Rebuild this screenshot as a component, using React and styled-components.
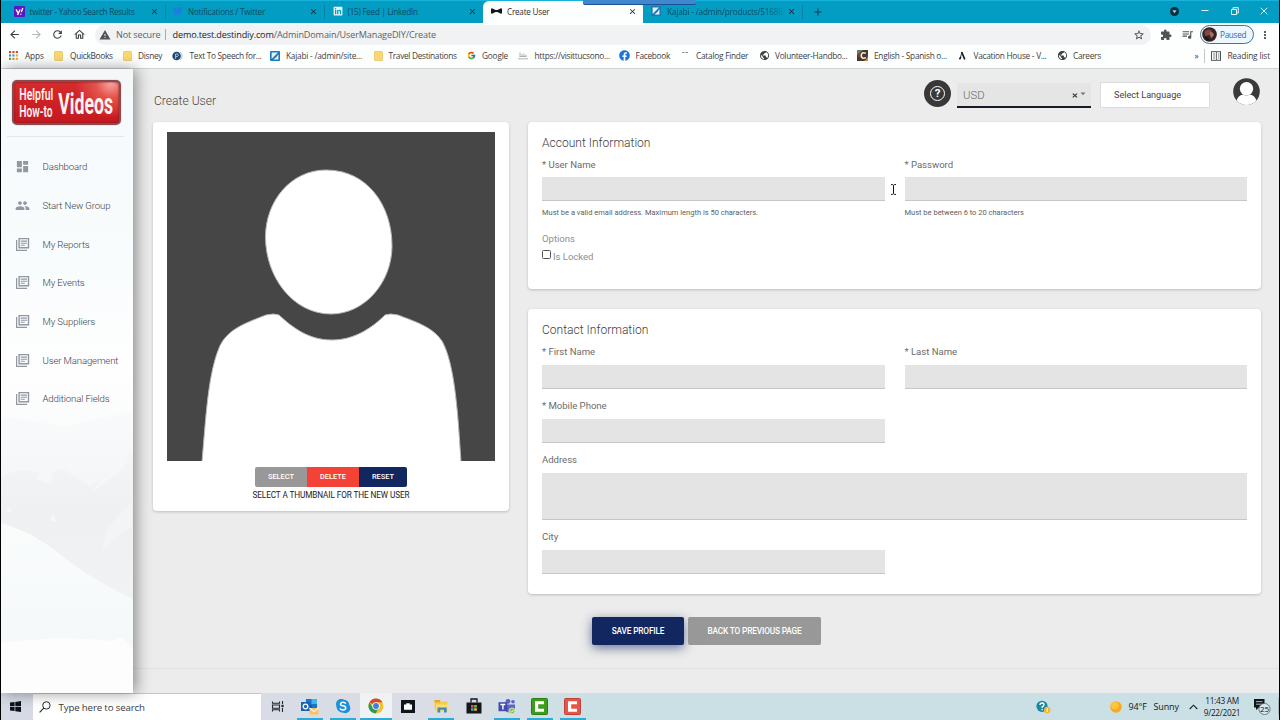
import React from 'react';
import styled, { createGlobalStyle } from 'styled-components';
import {
  MdDashboard, MdPeople, MdExtension, MdQueueMusic,
  MdStarBorder, MdRefresh, MdArrowBack, MdArrowForward, MdOutlineHome,
  MdWarning, MdMoreVert, MdPublic, MdClose, MdAdd,
} from 'react-icons/md';
import { FcGoogle } from 'react-icons/fc';
import { FaFacebook, FaTwitter, FaLinkedin } from 'react-icons/fa';

const GlobalStyle = createGlobalStyle`
  * { box-sizing: border-box; }
  body { margin: 0; background: #000; }
  svg { display: block; flex: none; }
  button { font: inherit; }
`;

const ui = '"Open Sans", "Noto Sans", sans-serif';
const NAVY = '#12275f';

const Screen = styled.div`
  width: 1280px;
  height: 720px;
  padding: 0 1px;
  overflow: hidden;
  display: flex;
  flex-direction: column;
  background: #000;
  font-family: Roboto, sans-serif;
  color: #3c4043;
`;

/* ---------- browser tabs ---------- */
const TabStrip = styled.div`
  position: relative;
  height: 23px;
  flex: none;
  display: flex;
  background: #039cc2;
  border-top: 1px solid #16b4da;
  font-family: ${ui};
`;

const Tab = styled.div`
  width: ${p => p.$w}px;
  height: 22px;
  padding: 0 6px 2px ${p => p.$pad}px;
  display: flex;
  align-items: center;
  background: ${p => (p.$active ? '#fdfefe' : 'transparent')};
  border-radius: 6px 6px 0 0;
  color: ${p => (p.$active ? '#2c2f33' : '#0b4a62')};
  font-size: 8.1px;
  letter-spacing: ${p => p.$ls || 0}px;
  white-space: nowrap;
`;

const TabTitle = styled.span`
  flex: 1;
  margin-left: ${p => p.$gap || 5}px;
  ${p => p.$fade && 'mask-image: linear-gradient(90deg, #000 84%, rgba(0,0,0,0.15) 100%); margin-right: 3px;'}
`;

const Divider = styled.i`
  width: 1px;
  height: ${p => p.$h || 14}px;
  align-self: center;
  background: ${p => p.$color || '#0781a5'};
`;

const NewTab = styled.div`
  width: 29px;
  display: grid;
  place-items: center;
  color: #06384c;
`;

const ShareBar = styled.div`
  position: absolute;
  left: 582px;
  top: -1px;
  width: 113px;
  height: 5px;
  background: #3f87cf;
  border-bottom: 1px solid #1c5294;
  border-radius: 0 0 2px 2px;
`;

const WindowButtons = styled.div`
  margin-left: auto;
  width: 120px;
  display: flex;
  align-items: center;
  justify-content: space-between;
  padding: 0 11px 3px 10px;
  color: #e4f7fb;
`;

/* ---------- toolbar ---------- */
const Toolbar = styled.div`
  height: 23px;
  flex: none;
  display: flex;
  align-items: center;
  background: #fdfefe;
  font-family: ${ui};
  color: #3b3e42;
`;

const NavButtons = styled.div`
  width: 94px;
  padding-left: 7px;
  display: flex;
  gap: 8.5px;
`;

const AddressBar = styled.div`
  width: 1056px;
  height: 20px;
  display: flex;
  align-items: center;
  padding: 0 6px 0 4px;
  border-radius: 10px;
  background: #f0f2f4;
  font-size: 9.1px;
  color: #5d6166;
  white-space: nowrap;
`;

const NotSecure = styled.span`
  width: 49px;
  margin-left: 5px;
  letter-spacing: -0.16px;
`;

const Url = styled.span`
  flex: 1;
  margin-left: 6.5px;
  letter-spacing: -0.14px;
  b { font-weight: 400; color: #202327; }
`;

const ToolbarIcons = styled.div`
  display: flex;
  align-items: center;
  gap: 9px;
  margin-left: 8.5px;
  color: #505357;
`;

const Paused = styled.div`
  display: flex;
  align-items: center;
  gap: 3.5px;
  width: 54px;
  height: 19px;
  margin: 0 5.5px 0 6px;
  padding-left: 1px;
  border: 1px solid #46718f;
  border-radius: 10px;
  background: #edf7fd;
  color: #2a6cb0;
  font-size: 8.2px;
  letter-spacing: -0.3px;
`;

/* ---------- bookmarks ---------- */
const Bookmarks = styled.div`
  height: 23px;
  flex: none;
  display: flex;
  align-items: center;
  padding: 0 9px 3px 8px;
  background: #fdfefe;
  border-bottom: 1px solid #cfd2d4;
  font-family: ${ui};
  font-size: 8.3px;
  color: #3d4043;
  white-space: nowrap;
`;

const Bookmark = styled.div`
  width: ${p => p.$w}px;
  display: flex;
  align-items: center;
  letter-spacing: ${p => p.$ls ?? -0.3}px;
`;

const BookmarkIcon = styled.span`
  width: ${p => p.$w}px;
`;

const ReadingList = styled.div`
  margin-left: auto;
  display: flex;
  align-items: center;
  gap: 6px;
  letter-spacing: -0.15px;
`;

/* ---------- page ---------- */
const Page = styled.div`
  height: 624px;
  flex: none;
  display: flex;
  background: #ececec;
`;

const Sidebar = styled.aside`
  position: relative;
  z-index: 1;
  width: 132px;
  flex: none;
  background: linear-gradient(#f4f6f7 0, #f7fafc 50px, #f9fcfd 200px, #fefefe 300px, #fafbfb 370px);
  box-shadow: 3px 0 14px rgba(0, 0, 0, 0.42);
`;

const Scenery = styled.svg`
  position: absolute;
  left: 0;
  bottom: 0;
`;

const SidebarBody = styled.div`
  position: relative;
  padding: 11px 11px 0;
`;

const LogoRule = styled.div`
  height: 12px;
  margin: 0 -2px 10.5px -5px;
  border-bottom: 1px solid #e3e7ea;
`;

const NavItem = styled.a`
  display: flex;
  align-items: center;
  height: 38.65px;
  padding-left: 3px;
  color: #3d4043;
  font-size: 9.6px;
  font-weight: 300;
  letter-spacing: -0.13px;
  white-space: nowrap;
  svg { color: #9298a2; margin-right: 12.5px; }
`;

const Main = styled.main`
  flex: 1;
  display: flex;
  flex-direction: column;
  padding: 0 18px 0 20px;
`;

const PageHeader = styled.header`
  height: 53px;
  display: flex;
  align-items: flex-start;
`;

const PageTitle = styled.h1`
  flex: 1;
  margin: 25px 0 0 1px;
  font-size: 12.1px;
  line-height: 15px;
  font-weight: 300;
  color: #484848;
`;

const CurrencySelect = styled.div`
  width: 134px;
  height: 25px;
  margin: 14px 9px 0 6px;
  padding: 1px 5px 0 6px;
  display: flex;
  align-items: center;
  background: #e5e5e5;
  border-bottom: 2px solid #141a28;
  font-size: 11.3px;
  font-weight: 300;
  color: #666;
  span { flex: 1; padding-top: 1px; }
`;

const LanguageSelect = styled.div`
  width: 110px;
  height: 26px;
  margin: 13px 23px 0 0;
  padding-left: 13px;
  line-height: 24px;
  background: #fff;
  border: 1px solid #dcdcdc;
  font-size: 9.1px;
  color: #444;
`;

const Columns = styled.div`
  display: flex;
  align-items: flex-start;
  gap: 19px;
`;

const Card = styled.section`
  background: #fff;
  border-radius: 4px;
  box-shadow: 0 1px 3px rgba(0, 0, 0, 0.2);
`;

const PhotoCard = styled(Card)`
  width: 356px;
  height: 389px;
  padding-top: 10px;
  display: flex;
  flex-direction: column;
  align-items: center;
`;

const ButtonGroup = styled.div`
  display: flex;
  margin-top: 6px;
  border-radius: 2px;
  overflow: hidden;
`;

const GroupButton = styled.button`
  width: ${p => p.$w}px;
  height: 20px;
  padding: 0 0 1px;
  border: 0;
  background: ${p => p.$bg};
  color: #fff;
  font-size: 7.4px;
  font-weight: 500;
`;

const PhotoHint = styled.p`
  margin: 3px 0 0;
  font-size: 8.2px;
  letter-spacing: -0.09px;
  line-height: 11px;
  color: #1c1c1c;
  white-space: nowrap;
`;

const Forms = styled.div`
  width: 733px;
  display: flex;
  flex-direction: column;
  gap: 20px;
`;

const FormCard = styled(Card)`
  height: ${p => p.$h}px;
  padding: 14px 14px 0;
`;

const CardTitle = styled.h2`
  margin: 0 0 7px;
  font-size: 12.05px;
  line-height: 15px;
  font-weight: 300;
  color: #3d3d3d;
`;

const Grid = styled.div`
  display: grid;
  grid-template-columns: 1fr 1fr;
  column-gap: 20px;
  row-gap: 10px;
`;

const Field = styled.label`
  display: block;
  grid-column: ${p => (p.$wide ? '1 / -1' : p.$first ? '1' : 'auto')};
`;

const FieldLabel = styled.span`
  display: block;
  height: ${p => p.$h || 20}px;
  line-height: 13px;
  font-size: 9.6px;
  color: #6c6c6c;
  letter-spacing: -0.03px;
`;

const Input = styled.span`
  display: block;
  height: ${p => p.$h || 24}px;
  background: #e4e4e4;
  border-bottom: 1px solid #c6c6c6;
`;

const Helper = styled.span`
  display: block;
  margin-top: 6px;
  font-size: 7.5px;
  line-height: 12px;
  color: #606060;
`;

const Options = styled.div`
  margin-top: 13px;
  font-size: 9.6px;
  letter-spacing: -0.05px;
  color: #8f8f8f;
  line-height: 13px;
`;

const CheckRow = styled.div`
  display: flex;
  align-items: flex-start;
  gap: 2px;
  margin-top: 5px;
`;

const Checkbox = styled.i`
  width: 9px;
  height: 9px;
  border: 1px solid #555;
  border-radius: 1.5px;
  background: #fff;
`;

const Actions = styled.div`
  display: flex;
  gap: 4px;
  margin: 23px 0 0 439px;
`;

const ActionButton = styled.button`
  width: ${p => p.$w}px;
  height: 28px;
  padding: 0 0 1px;
  border: 0;
  border-radius: 2px;
  background: ${p => p.$bg};
  box-shadow: ${p => (p.$raised ? '0 3px 11px rgba(18, 39, 95, 0.6)' : 'none')};
  color: #fff;
  font-size: 8.3px;
  letter-spacing: -0.16px;
  font-weight: 500;
  white-space: nowrap;
`;

const FooterRule = styled.div`
  margin: 23px -18px 0 -20px;
  border-top: 1px solid #e0e0e0;
`;

const TextCursor = styled.svg`
  position: absolute;
  left: 890px;
  top: 184px;
`;

/* ---------- taskbar ---------- */
const Taskbar = styled.footer`
  height: 27px;
  flex: none;
  display: flex;
  background: linear-gradient(90deg, #d5dae5 0, #dadde6 34%, #cbe0e5 46%, #cae0e4 100%);
  font-family: ${ui};
  color: #14181c;
`;

const Start = styled.div`
  width: 32px;
  padding-right: 3px;
  display: grid;
  place-items: center;
`;

const Search = styled.div`
  width: 228px;
  display: flex;
  align-items: center;
  gap: 7.5px;
  padding-left: 6px;
  border-top: 1px solid #c4c8ce;
  background: #fff;
  font-size: 9.7px;
  letter-spacing: -0.15px;
  color: #3b3b3b;
`;

const Tiles = styled.div`
  display: flex;
  gap: 0.85px;
`;

const Tile = styled.div`
  width: 32px;
  height: 27px;
  display: flex;
  flex-direction: column;
  align-items: center;
  justify-content: space-between;
  padding-top: 5px;
  background: ${p => (p.$current ? '#f0f2f6' : 'transparent')};
  &::after {
    content: '';
    width: ${p => (p.$current ? 32 : 26)}px;
    height: 2px;
    background: ${p => (p.$open ? '#2fa9d6' : 'transparent')};
  }
`;

const Tray = styled.div`
  margin-left: auto;
  display: flex;
  align-items: center;
  font-size: 9px;
  letter-spacing: -0.1px;
  white-space: nowrap;
`;

const Weather = styled.div`
  display: flex;
  align-items: center;
  gap: 6.5px;
  width: 79px;
  margin-left: 59px;
`;

const Clock = styled.div`
  width: 44px;
  margin: 0 9px 0 2px;
  text-align: center;
  font-size: 8.3px;
  line-height: 11.5px;
  letter-spacing: -0.3px;
`;

const Notifications = styled.div`
  width: 26px;
  border-right: 1px solid #a8bcc1;
`;

/* ---------- drawings ---------- */
const LibraryIcon = () => (
  <svg width="15" height="15" viewBox="0 0 15 15" fill="none" stroke="currentColor">
    <path d="M1.6 3V13.4H12" strokeWidth="1.2" />
    <path d="M4.1 1.6H13.5V10.8H4.1Z" strokeWidth="1.4" />
    <path d="M5.7 4.1H12M5.7 6.2H12M5.7 8.3H9.8" strokeWidth="1.1" />
  </svg>
);

const Folder = () => (
  <svg width="9" height="10" viewBox="0 0 9 10">
    <path d="M.5 1.2Q.5.5 1.2.5H7.8Q8.5.5 8.5 1.2V9.5H1.2Q.5 9.5.5 8.8Z" fill="#fbd970" stroke="#e2b94b" strokeWidth=".6" />
    <path d="M6.5 9.5V7.6H8.5" fill="#fff0b8" stroke="#e2b94b" strokeWidth=".5" />
  </svg>
);

const KajabiIcon = () => (
  <svg width="10" height="10" viewBox="0 0 10 10">
    <rect width="10" height="10" rx="1" fill="#1f78b4" />
    <path d="M1.6 1.6H8L1.6 8Z" fill="#dff1fb" />
    <path d="M8.4 3.3V8.4H3.4Q6.8 6.6 8.4 3.3Z" fill="#eaf6fc" />
  </svg>
);

const YahooIcon = () => (
  <svg width="11" height="11" viewBox="0 0 11 11">
    <rect width="11" height="11" rx="1" fill="#5b16c2" />
    <path d="M2 3.4 4 6.8M6 3.4 3.6 9M8.8 2 7.3 6.1M6.8 7.8v1" stroke="#fff" strokeWidth="1.3" fill="none" />
  </svg>
);

const BowTie = () => (
  <svg width="11" height="6" viewBox="0 0 11 6">
    <path d="M0 .8Q1 0 2 .7L4.6 2H6.4L9 .7Q10 0 11 .8V5.2Q10 6 9 5.3L6.4 4H4.6L2 5.3Q1 6 0 5.2Z" fill="#161616" />
  </svg>
);

const SpeechIcon = () => (
  <svg width="11" height="10" viewBox="0 0 11 10">
    <circle cx="4.6" cy="5" r="4.3" fill="#24486f" />
    <path d="M3.6 7.8V3H5.2Q6.6 3.2 6.4 4.4T3.8 5.6" fill="none" stroke="#a9c6e0" strokeWidth="1" />
    <path d="M8.4 1.2Q11.8 5 8.4 8.8" fill="none" stroke="#8cbde5" strokeWidth=".9" />
  </svg>
);

const PaleSketch = () => (
  <svg width="10" height="9" viewBox="0 0 10 9">
    <path d="M0 7.8H10M2 5.5V1.5M4 5V3M6 5.5V2.5M8 5.5V3.8M1.5 5.5H8.5" stroke="#a7a7a7" fill="none" strokeWidth=".9" />
  </svg>
);

const PaleDash = () => (
  <svg width="8" height="9" viewBox="0 0 8 9"><path d="M1 1.5H3.4M4.4 1.5H7" stroke="#8b8b8b" /></svg>
);

const AppsIcon = () => (
  <svg width="9" height="9" viewBox="0 0 9 9">
    {['#d93f36', '#d93f36', '#d93f36', '#43a05a', '#4a83dd', '#e9ad22', '#43a05a', '#d4902a', '#e9ad22'].map((c, i) => (
      <rect key={i} x={(i % 3) * 3.4} y={Math.floor(i / 3) * 3.4} width="2.1" height="2.1" fill={c} />
    ))}
  </svg>
);

const SpanishIcon = () => (
  <svg width="11" height="11" viewBox="0 0 11 11">
    <rect width="11" height="11" fill="#463a2c" />
    <path d="M0 0H6L0 5Z" fill="#5d8754" />
    <path d="M6 11Q11 10 11 4V11Z" fill="#d08b42" />
    <path d="M8.8 3.2Q4.4 1.6 4.2 5.6 4.4 9.2 9 7.8" fill="none" stroke="#f2e9db" strokeWidth="1.6" />
    <path d="M2 3V7" stroke="#b93b34" strokeWidth="1.2" />
  </svg>
);

const PeakIcon = () => (
  <svg width="7" height="9" viewBox="0 0 7 9"><path d="M.4 8.3 1.9 6M2.6 1 5.8 8.4" stroke="#161616" strokeWidth="1.6" fill="none" /><path d="M3 1.4 1.2 7" stroke="#161616" strokeWidth=".8" /></svg>
);

const Face = () => (
  <svg width="15" height="15" viewBox="0 0 15 15">
    <circle cx="7.5" cy="7.5" r="7.3" fill="#362324" />
    <path d="M2.5 4.5Q6 1 10 4L8 8 3 9Z" fill="#7d4a42" />
    <path d="M7.5 5.5Q11 4 12 8L9 11.5Z" fill="#b06d5c" />
    <path d="M2 10Q5 8 8 13L5 14Z" fill="#1c1720" />
  </svg>
);

const ReadingIcon = () => (
  <svg width="10" height="10" viewBox="0 0 10 10">
    <rect x=".5" y=".7" width="9" height="8.6" fill="none" stroke="#505357" />
    <path d="M2.2 3H4.3M2.2 5H4.3M2.2 7H4.3M5.5 1V9M7 3H8.4M7 5H8.4M7 7H8.4" stroke="#505357" strokeWidth=".8" />
  </svg>
);

const LogoArt = styled.div`
  width: 109px;
  height: 45px;
  display: flex;
  align-items: center;
  justify-content: center;
  border: 2px solid #8a4a4e;
  border-radius: 5px;
  background: radial-gradient(circle at 92% 2%, #f7a9a0 0, #e4544c 14%, transparent 34%), linear-gradient(#d62c2c, #cc1f24 60%, #c4191f);
  box-shadow: inset 0 0 2px #5d1a1c, 0 0 1px #555;
`;

const LogoWords = styled.svg`
  overflow: visible;
  font-family: Roboto, "Liberation Sans Narrow", sans-serif;
  font-weight: 600;
  fill: #fff3f2;
`;

const Logo = () => (
  <LogoArt>
    <LogoWords width="105" height="41" viewBox="0 0 105 41">
      <g transform="scale(0.66 1)">
        <text fontSize="17.2">
          <tspan x="8" y="17.8" textLength="51.5" lengthAdjust="spacingAndGlyphs">Helpful</tspan>
          <tspan x="8" y="35.2" textLength="50.5" lengthAdjust="spacingAndGlyphs">How-to</tspan>
        </text>
        <text x="67" y="32.3" fontSize="30" fontWeight="700" textLength="83" lengthAdjust="spacingAndGlyphs">Videos</text>
      </g>
    </LogoWords>
  </LogoArt>
);

const Silhouette = () => (
  <svg width="328" height="329" viewBox="0 0 328 329">
    <rect width="328" height="329" fill="#464646" />
    <g fill="#fff" stroke="#b7b7b7" strokeWidth="1">
      <path d="M159 38C200 38 225 73 225 114 225 150 198 182 164 182 126 182 98.5 145 98.5 105 98.5 69 124 38 159 38Z" />
      <path d="M35 330C39 284 41 243 52 216C60 196 82 190 99 183Q107 181 112 183C126 196 142 208 165 208C187 208 205 196 218 183Q223 181 231 183C246 189 265 194 275 209C288 232 291 283 294 330Z" />
    </g>
  </svg>
);

const HelpBadge = styled.div`
  width: 27px;
  height: 27px;
  margin-top: 11px;
  display: grid;
  place-items: center;
  border-radius: 50%;
  background: #383838;
  span {
    width: 15px;
    height: 15px;
    border: 1.6px solid #fff;
    border-radius: 50%;
    color: #fff;
    font-size: 11.5px;
    font-weight: 700;
    line-height: 13px;
    text-align: center;
  }
`;

const AvatarBox = styled.div`
  padding-top: 9px;
`;

const Avatar = () => (
  <svg width="28" height="27" viewBox="0 0 28 27">
    <circle cx="13.5" cy="13.5" r="13.3" fill="#3a3a3a" />
    <circle cx="13.5" cy="10.7" r="6.7" fill="#fff" />
    <path d="M3.7 22.6Q5 17.5 10 16.5Q13.5 18.5 17 16.5Q22 17.5 23.3 22.6Q19.5 27 13.5 27T3.7 22.6Z" fill="#fff" />
  </svg>
);

const OutlookIcon = () => (
  <svg width="18" height="17" viewBox="0 0 18 17">
    <path d="M5 1H16V11H5Z" fill="#1975c5" /><path d="M10.5 1H16V6H10.5Z" fill="#43b2ee" />
    <path d="M5 7H10.5V11H5Z" fill="#12519a" />
    <rect x="0" y="4" width="9" height="9" fill="#1166b8" />
    <circle cx="4.5" cy="8.5" r="2.3" fill="none" stroke="#fff" strokeWidth="1.3" />
    <path d="M8.5 10H17.5V16.5H8.5Z" fill="#f5c16c" /><path d="M8.5 10 13 13.6 17.5 10" fill="none" stroke="#fff6e3" strokeWidth="1.2" />
  </svg>
);

const SkypeIcon = () => (
  <svg width="16" height="16" viewBox="0 0 16 16">
    <circle cx="6" cy="6" r="5" fill="#1b91d8" /><circle cx="10.3" cy="10.3" r="5" fill="#1b91d8" /><circle cx="8" cy="8" r="6.6" fill="#1b91d8" />
    <path d="M10.7 5.7Q10 4.2 8 4.2T5.4 6Q5.4 7.4 8 7.8T10.7 10Q10.7 11.9 8 11.9T5.2 10.2" fill="none" stroke="#fff" strokeWidth="1.5" />
  </svg>
);

const ChromeIcon = () => (
  <svg width="16" height="16" viewBox="0 0 16 16">
    <circle cx="8" cy="8" r="7.5" fill="#f4c22e" />
    <path d="M8 8 1.5 4.2A7.5 7.5 0 0 1 14.5 4.3H8Z" fill="#dc4437" />
    <path d="M1.5 4.2A7.5 7.5 0 0 0 7.5 15.5L10.8 9.7 4.8 9.7Z" fill="#2c9b56" />
    <circle cx="8" cy="8" r="3.7" fill="#fff" /><circle cx="8" cy="8" r="2.9" fill="#3f7fe0" />
  </svg>
);

const CameraTile = () => (
  <svg width="14" height="16" viewBox="0 -1 14 16">
    <rect y="1" width="14" height="13" fill="#11151a" />
    <path d="M3 5.5H5.3V4.3H8.7V5.5H11V10.7H3Z" fill="#fff" />
  </svg>
);

const ExplorerIcon = () => (
  <svg width="15" height="15" viewBox="0 -1 15 15">
    <path d="M.5 1H6L7 2.5H13.5V12.5H2L.5 9Z" fill="#f6cb4d" /><path d="M.5 1H6V3.3H.5Z" fill="#e3a826" />
    <path d="M2 5.5H14.5V12.5H2Z" fill="#fbdc75" /><path d="M3.5 13.5V8.5H12.7V13.5H10V10.8H6.2V13.5Z" fill="#3c8cb6" />
  </svg>
);

const StoreIcon = () => (
  <svg width="16" height="16" viewBox="0 0 16 16">
    <path d="M5 4.5V1H11V4.5" stroke="#15171a" strokeWidth="1.3" fill="none" /><rect x=".5" y="4.5" width="15" height="11" fill="#15171a" />
    <path d="M5 7H7.6V9.6H5Z" fill="#e2563b" /><path d="M8.2 7H10.8V9.6H8.2Z" fill="#83ba3a" />
    <path d="M5 10.2H7.6V12.8H5Z" fill="#39a5dc" /><path d="M8.2 10.2H10.8V12.8H8.2Z" fill="#f3bd2d" />
  </svg>
);

const TeamsIcon = () => (
  <svg width="18" height="17" viewBox="0 0 18 17">
    <circle cx="10" cy="3.3" r="2.4" fill="#5b61c6" /><circle cx="15" cy="3.7" r="1.8" fill="#5b61c6" />
    <path d="M6.5 6.5H17V11.5Q16 14.5 12 14.5 8 15 6.5 11Z" fill="#5d64c8" />
    <rect x=".5" y="4.2" width="8.8" height="9" fill="#454bae" /><path d="M2.4 6.5H7.3M4.9 6.5V11.5" stroke="#fff" strokeWidth="1.4" />
    <circle cx="14" cy="13" r="3.1" fill="#8ac148" stroke="#fff" strokeWidth=".6" /><path d="M12.4 13 13.6 14.2 15.7 11.9" stroke="#fff" strokeWidth=".9" fill="none" />
  </svg>
);

const CamtasiaIcon = ({ color, edge }) => (
  <svg width="17" height="17" viewBox="0 0 17 17">
    <rect x=".5" y=".5" width="16" height="16" rx="1" fill={color} stroke={edge} />
    <path d="M13 3.3H4V13.7H13V10.8H7.2V6.2H13Z" fill="#fff" />
  </svg>
);

const TaskViewIcon = () => (
  <svg width="13" height="15" viewBox="0 -2 13 15">
    <path d="M1.5 1.5V3.3H8.5V1.5M1.5 11.5V9.8H8.5V11.5M1.5 5H8.5V8.2H1.5ZM11.5 1V4M11.5 7.8V12" fill="none" stroke="#24282c" strokeWidth="1.1" />
    <rect x="10.4" y="4.8" width="2.2" height="2.2" fill="#24282c" />
  </svg>
);

const WindowsIcon = () => (
  <svg width="11" height="11" viewBox="0 0 11 11">
    <path d="M0 1.6 4.6 1V5.2H0ZM5.3.9 11 .1V5.2H5.3ZM0 5.9H4.6V10.1L0 9.4ZM5.3 5.9H11V11L5.3 10.2Z" fill="#0d1116" />
  </svg>
);

const SearchIcon = () => (
  <svg width="12" height="12" viewBox="0 0 12 12">
    <circle cx="7.4" cy="4.4" r="3.7" fill="none" stroke="#26292c" /><path d="M4.8 7.1.6 11.4" stroke="#26292c" strokeWidth="1.1" />
  </svg>
);

const TrayHelpIcon = () => (
  <svg width="15" height="14" viewBox="0 0 15 14">
    <circle cx="6" cy="6.3" r="5.6" fill="#1c87a5" />
    <path d="M4 5Q4 3 6 3T8 4.8Q8 6 6.1 6.8V8M6.1 9V10.2" stroke="#fff" strokeWidth="1.3" fill="none" />
    <circle cx="11.2" cy="10" r="3.2" fill="#f0b62f" /><path d="M11.2 8V12" stroke="#fff7de" strokeWidth="1" />
  </svg>
);

const NotificationIcon = () => (
  <svg width="19" height="17" viewBox="0 0 19 17">
    <path d="M1 1H11.5V9.5H6L3 12V9.5H1Z" fill="#101519" /><path d="M3 3.6H9.5M3 6.2H9.5" stroke="#cfe2e5" strokeWidth=".8" />
    <circle cx="11.5" cy="11" r="5.6" fill="#d9e5e7" stroke="#59666b" strokeWidth=".8" />
    <text x="11.6" y="14" textAnchor="middle" fontSize="8" fontFamily='"Open Sans"' fill="#101519">25</text>
  </svg>
);

const bookmarks = [
  { text: 'Apps', icon: <AppsIcon />, w: 45, iw: 16, ls: -0.15 },
  { text: 'QuickBooks', icon: <Folder />, w: 69, iw: 16 },
  { text: 'Disney', icon: <Folder />, w: 49, iw: 15 },
  { text: 'Text To Speech for...', icon: <SpeechIcon />, w: 98, iw: 17.5 },
  { text: 'Kajabi - /admin/site...', icon: <KajabiIcon />, w: 103.5, iw: 16, ls: -0.24 },
  { text: 'Travel Destinations', icon: <Folder />, w: 93, iw: 15, ls: -0.31 },
  { text: 'Google', icon: <FcGoogle size={9} />, w: 51.5, iw: 15.5, ls: -0.2 },
  { text: 'https://visittucsono...', icon: <PaleSketch />, w: 100.5, iw: 16.5, ls: -0.25 },
  { text: 'Facebook', icon: <FaFacebook size={11} color="#1a74dc" />, w: 62, iw: 17 },
  { text: 'Catalog Finder', icon: <PaleDash />, w: 78, iw: 15.5, ls: -0.25 },
  { text: 'Volunteer-Handbo...', icon: <MdPublic size={11} />, w: 98.5, iw: 16.5 },
  { text: 'English - Spanish o...', icon: <SpanishIcon />, w: 102, iw: 17, ls: -0.26 },
  { text: 'Vacation House - V...', icon: <PeakIcon />, w: 98, iw: 14.5, ls: -0.27 },
  { text: 'Careers', icon: <MdPublic size={11} />, w: 60, iw: 16 },
];

const navItems = [
  ['Dashboard', MdDashboard],
  ['Start New Group', MdPeople],
  ['My Reports', LibraryIcon],
  ['My Events', LibraryIcon],
  ['My Suppliers', LibraryIcon],
  ['User Management', LibraryIcon],
  ['Additional Fields', LibraryIcon],
];

const FormField = ({ label, helper, wide, first, height, labelHeight }) => (
  <Field $wide={wide} $first={first}>
    <FieldLabel $h={labelHeight}>{label}</FieldLabel>
    <Input $h={height} />
    {helper && <Helper>{helper}</Helper>}
  </Field>
);

function BrowserChrome() {
  return (
    <>
      <TabStrip>
        <Tab $w={164} $pad={12.5} $ls={-0.24}><YahooIcon /><TabTitle $gap={5}>twitter - Yahoo Search Results</TabTitle><MdClose size={9} color="#0c2c3b" /></Tab>
        <Divider />
        <Tab $w={158} $pad={7} $ls={-0.18}><FaTwitter size={10} color="#1c7ee0" /><TabTitle>Notifications / Twitter</TabTitle><MdClose size={9} color="#0c2c3b" /></Tab>
        <Divider />
        <Tab $w={158} $pad={7.5} $ls={-0.25}><FaLinkedin size={10} color="#e8f7ff" /><TabTitle>(15) Feed | LinkedIn</TabTitle><MdClose size={9} color="#0c2c3b" /></Tab>
        <Tab $w={160} $pad={8} $active $ls={-0.2}><BowTie /><TabTitle>Create User</TabTitle><MdClose size={9} color="#222" /></Tab>
        <Tab $w={159} $pad={8} $ls={-0.12}><KajabiIcon /><TabTitle $gap={6} $fade>Kajabi - /admin/products/51688</TabTitle><MdClose size={9} color="#0c2c3b" /></Tab>
        <Divider />
        <NewTab><MdAdd size={12} /></NewTab>
        <WindowButtons>
          <svg width="11" height="11" viewBox="0 0 11 11"><circle cx="5.5" cy="6.5" r="4.5" fill="#072f40" /><path d="M3.3 5.3H7.7L5.5 8.2Z" fill="#8fd5e8" /></svg>
          <svg width="8" height="8" viewBox="0 0 8 8"><path d="M.5 3.5H7.5" stroke="currentColor" /></svg>
          <svg width="8" height="8" viewBox="0 0 8 8"><path d="M.5 2.5H5.5V7.5H.5ZM2 2.5V.7H7.3V6H5.5" fill="none" stroke="currentColor" /></svg>
          <svg width="8" height="8" viewBox="0 0 8 8"><path d="M.7.7 7.3 7.3M7.3.7.7 7.3" stroke="currentColor" /></svg>
        </WindowButtons>
        <ShareBar />
      </TabStrip>
      <Toolbar>
        <NavButtons>
          <MdArrowBack size={13} />
          <MdArrowForward size={13} color="#b4b7ba" />
          <MdRefresh size={13} />
          <MdOutlineHome size={13} />
        </NavButtons>
        <AddressBar>
          <MdWarning size={12} color="#505357" />
          <NotSecure>Not secure</NotSecure>
          <Divider $h={11} $color="#a9acb0" />
          <Url><b>demo.test.destindiy.com</b>/AdminDomain/UserManageDIY/Create</Url>
          <MdStarBorder size={12} color="#404347" />
        </AddressBar>
        <ToolbarIcons>
          <MdExtension size={12} />
          <MdQueueMusic size={13} />
        </ToolbarIcons>
        <Paused><Face />Paused</Paused>
        <MdMoreVert size={12} />
      </Toolbar>
      <Bookmarks>
        {bookmarks.map(b => (
          <Bookmark key={b.text} $w={b.w} $ls={b.ls}>
            <BookmarkIcon $w={b.iw}>{b.icon}</BookmarkIcon>{b.text}
          </Bookmark>
        ))}
        <ReadingList>
          <span>»</span>
          <Divider $color="#c5c8ca" />
          <ReadingIcon />Reading list
        </ReadingList>
      </Bookmarks>
    </>
  );
}

export default function App() {
  return (
    <Screen>
      <GlobalStyle />
      <BrowserChrome />
      <Page>
        <Sidebar>
          <Scenery width="132" height="290" viewBox="0 0 132 290">
            <defs>
              <linearGradient id="haze" x1="0" y1="0" x2="0" y2="1">
                <stop offset="0" stopColor="#f9fafb" /><stop offset=".25" stopColor="#f4f6f7" /><stop offset="1" stopColor="#f3f6f7" />
              </linearGradient>
              <linearGradient id="ridge" x1="0" y1="0" x2="0" y2="1">
                <stop offset="0" stopColor="#f3f5f6" /><stop offset=".4" stopColor="#eff0f1" /><stop offset="1" stopColor="#f1f2f3" />
              </linearGradient>
              <linearGradient id="snow" x1="0" y1="0" x2="0" y2="1">
                <stop offset="0" stopColor="#fafcfc" /><stop offset="1" stopColor="#f3f7f8" />
              </linearGradient>
            </defs>
            <path d="M0 14Q40 18 62 24L132 8V290H0Z" fill="url(#haze)" />
            <path d="M0 74Q22 62 42 72L62 66 90 84 132 48V204H70L0 118Z" fill="url(#ridge)" />
            <path d="M34 76 40 68 44 72 48 67 52 76 47 80ZM90 90 102 74 116 62 131 50 122 66 104 80ZM49 117 52 111 55 119ZM5 108 9 103 11 110Z" fill="#f6f7f7" />
            <path d="M100 150 106 128 118 110 131 100V124L114 136Z" fill="#f3f4f5" />
            <path d="M0 120Q32 129 60 152T132 196V290H0Z" fill="url(#snow)" />
            <path d="M0 240Q60 232 112 238L121 234 132 246V290H0Z" fill="#fdfdfd" />
          </Scenery>
          <SidebarBody>
            <Logo />
            <LogoRule />
            {navItems.map(([text, Icon]) => (
              <NavItem key={text}><Icon size={15} />{text}</NavItem>
            ))}
          </SidebarBody>
        </Sidebar>
        <Main>
          <PageHeader>
            <PageTitle>Create User</PageTitle>
            <HelpBadge><span>?</span></HelpBadge>
            <CurrencySelect>
              <span>USD</span>
              <svg width="14" height="8" viewBox="0 0 14 8">
                <path d="M.8 2.6 5 6.4M5 2.6.8 6.4" stroke="#333" strokeWidth="1.2" /><path d="M8.5 1.5H13.5L11 4.3Z" fill="#777" />
              </svg>
            </CurrencySelect>
            <LanguageSelect>Select Language</LanguageSelect>
            <AvatarBox><Avatar /></AvatarBox>
          </PageHeader>
          <Columns>
            <PhotoCard>
              <Silhouette />
              <ButtonGroup>
                <GroupButton $w={52} $bg="#989898">SELECT</GroupButton>
                <GroupButton $w={52} $bg="#f44336">DELETE</GroupButton>
                <GroupButton $w={48} $bg={NAVY}>RESET</GroupButton>
              </ButtonGroup>
              <PhotoHint>SELECT A THUMBNAIL FOR THE NEW USER</PhotoHint>
            </PhotoCard>
            <Forms>
              <FormCard $h={167}>
                <CardTitle>Account Information</CardTitle>
                <Grid>
                  <FormField labelHeight={19} label="* User Name" helper="Must be a valid email address. Maximum length is 50 characters." />
                  <FormField labelHeight={19} label="* Password" helper="Must be between 6 to 20 characters" />
                </Grid>
                <Options>
                  Options
                  <CheckRow><Checkbox />Is Locked</CheckRow>
                </Options>
              </FormCard>
              <FormCard $h={285}>
                <CardTitle>Contact Information</CardTitle>
                <Grid>
                  <FormField label="* First Name" />
                  <FormField label="* Last Name" />
                  <FormField label="* Mobile Phone" first />
                  <FormField label="Address" wide height={47} />
                  <FormField label="City" first />
                </Grid>
              </FormCard>
            </Forms>
          </Columns>
          <Actions>
            <ActionButton $w={92} $bg={NAVY} $raised>SAVE PROFILE</ActionButton>
            <ActionButton $w={133} $bg="#989898">BACK TO PREVIOUS PAGE</ActionButton>
          </Actions>
          <FooterRule />
        </Main>
      </Page>
      <Taskbar>
        <Start><WindowsIcon /></Start>
        <Search><SearchIcon />Type here to search</Search>
        <Tiles>
          <Tile><TaskViewIcon /></Tile>
          <Tile $open><OutlookIcon /></Tile>
          <Tile $open><SkypeIcon /></Tile>
          <Tile $open $current><ChromeIcon /></Tile>
          <Tile><CameraTile /></Tile>
          <Tile $open><ExplorerIcon /></Tile>
          <Tile><StoreIcon /></Tile>
          <Tile $open><TeamsIcon /></Tile>
          <Tile $open><CamtasiaIcon color="#3f9c1c" edge="#2d7d12" /></Tile>
          <Tile $open><CamtasiaIcon color="#e4564a" edge="#c43f35" /></Tile>
        </Tiles>
        <Tray>
          <TrayHelpIcon />
          <Weather>
            <svg width="12" height="12" viewBox="0 0 12 12"><circle cx="6" cy="6" r="5.8" fill="#f9a91d" /><circle cx="4.8" cy="4.6" r="3.8" fill="#fcc53c" /></svg>
            <span>94°F</span><span>Sunny</span>
          </Weather>
          <svg width="9" height="6" viewBox="0 0 9 6"><path d="M.7 5 4.5 1.2 8.3 5" fill="none" stroke="#1b2024" strokeWidth="1.1" /></svg>
          <Clock>11:43 AM<br />9/22/2021</Clock>
          <Notifications><NotificationIcon /></Notifications>
        </Tray>
      </Taskbar>
      <TextCursor width="7" height="11" viewBox="0 0 7 11"><path d="M1 .6H2.6L3.5 1.3 4.4.6H6M3.5 1.3V9.7M1 10.4H2.6L3.5 9.7 4.4 10.4H6" fill="none" stroke="#111" /></TextCursor>
    </Screen>
  );
}
